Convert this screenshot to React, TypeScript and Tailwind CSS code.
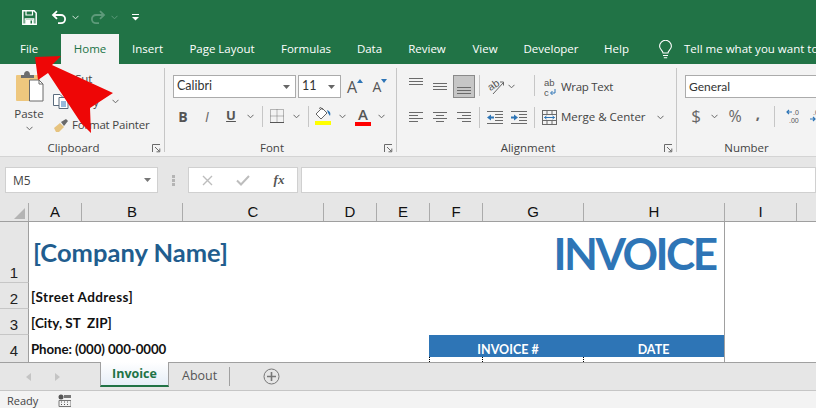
import React from "react";

const ui = { fontFamily: '"Open Sans", "Noto Sans", sans-serif' };
const cal = { fontFamily: 'Lato, "Open Sans", sans-serif' };
const ar = { fontFamily: '"Liberation Sans", Arial, sans-serif' };

const Chev = ({ color = "#666" }: { color?: string }) => (
  <svg width="7" height="5" viewBox="0 0 7 5"><path d="M.5 .8 3.5 3.8 6.5 .8" fill="none" stroke={color} strokeWidth="1" /></svg>
);

const Slot = ({ className, children }: { className: string; children?: React.ReactNode }) => (
  <div className={"flex items-center justify-center shrink-0 " + className}>{children}</div>
);

const VSep = ({ className }: { className: string }) => <div className={"w-px shrink-0 bg-[#c6c6c6] " + className} />;

const Lines = ({ l, w = 16, h = 12, color = "#6a6a6a" }: { l: number[][]; w?: number; h?: number; color?: string }) => (
  <svg width={w} height={h} viewBox={`0 0 ${w} ${h}`}>
    {l.map(([a, b, y], i) => (
      <path key={i} d={`M${a} ${y + 0.5}H${b}`} stroke={color} strokeWidth="1" />
    ))}
  </svg>
);

const Launcher = () => (
  <svg width="9" height="9" viewBox="0 0 9 9" fill="none" stroke="#6a6a6a" strokeWidth="1">
    <path d="M.5 8V.5H8" />
    <path d="M3 3 7.5 7.5M7.8 4.5V7.8H4.5" />
  </svg>
);

const Group = ({ className, label, launcher, children }: { className: string; label: string; launcher?: boolean; children: React.ReactNode }) => (
  <div className={"flex flex-col shrink-0 h-[92px] " + className}>
    <div className="h-[76px]">{children}</div>
    <div className="h-[16px] flex items-center">
      <div className="flex-1 text-center text-[11.5px] leading-[16px] text-[#444]">{label}</div>
      {launcher && (
        <div className="w-[17px] flex justify-end pr-[3px]">
          <Launcher />
        </div>
      )}
    </div>
  </div>
);

const Tab = ({ className, children }: { className: string; children: React.ReactNode }) => (
  <div className={"h-[30px] flex items-center justify-center text-[11.5px] text-white shrink-0 " + className}>{children}</div>
);

const ColH = ({ className, children }: { className: string; children?: React.ReactNode }) => (
  <div className={"h-[18px] flex items-center justify-center border-r border-[#ababab] text-[15px] leading-[18px] text-[#111] shrink-0 " + className} style={ar}>
    {children}
  </div>
);

const RowH = ({ className, children }: { className?: string; children: React.ReactNode }) => (
  <div className={"flex items-end justify-center bg-[#e6e6e6] border-r border-r-[#9f9f9f] border-b border-b-[#c6c6c6] text-[15px] leading-[18px] text-[#222] font-normal " + (className || "")} style={ar}>
    {children}
  </div>
);

const Pad = ({ className, children }: { className: string; children?: React.ReactNode }) => (
  <div className={"bg-white " + className}>{children}</div>
);

export default function App() {
  return (
    <div className="relative w-[816px] h-[408px] overflow-hidden flex flex-col bg-[#e6e6e6]" style={ui}>
      {/* title bar */}
      <div className="h-[34px] bg-[#217346] flex items-center shrink-0 pt-[1px]">
        <svg className="ml-[22px] shrink-0" width="15" height="15" viewBox="0 0 15 15" fill="none" stroke="#fff" strokeWidth="1.5">
          <path d="M.8.8H12L14.2 3V14.2H.8Z" />
          <path d="M4 1V5H10.5V1" strokeWidth="1.2" />
          <path d="M3.2 14V8.8H11.8V14" strokeWidth="1.2" />
          <rect x="4" y="9.5" width="7" height="4.5" fill="#fff" stroke="none" />
          <rect x="8.5" y="10.5" width="1.5" height="3" fill="#217346" stroke="none" />
        </svg>
        <svg className="ml-[14px] shrink-0" width="16" height="15" viewBox="0 0 16 15" fill="none" stroke="#fff" strokeWidth="1.8">
          <path d="M6 1.2 2 5 6 8.8" />
          <path d="M2.5 5H10a4 4 0 0 1 0 8.2H7" />
        </svg>
        <Slot className="w-[8px] ml-[4px]"><Chev color="#d7e8de" /></Slot>
        <svg className="ml-[11px] shrink-0" width="16" height="15" viewBox="0 0 16 15" fill="none" stroke="#5d9a7a" strokeWidth="1.8">
          <path d="M10 1.2 14 5 10 8.8" />
          <path d="M13.5 5H6a4 4 0 0 0 0 8.2H9" />
        </svg>
        <Slot className="w-[8px] ml-[4px]"><Chev color="#5d9a7a" /></Slot>
        <svg className="ml-[14px] shrink-0" width="7" height="7" viewBox="0 0 7 7" fill="#fff">
          <rect x="0" y="0" width="7" height="1" />
          <path d="M0 3H7L3.5 6.5Z" />
        </svg>
      </div>

      {/* tabs */}
      <div className="h-[30px] bg-[#217346] flex shrink-0">
        <Tab className="w-[61px] !justify-start pl-[20px]">File</Tab>
        <Tab className="w-[58px] bg-[#f3f3f3] !text-[#217346]">Home</Tab>
        <Tab className="w-[57px]">Insert</Tab>
        <Tab className="w-[92px]">Page Layout</Tab>
        <Tab className="w-[76px]">Formulas</Tab>
        <Tab className="w-[51px]">Data</Tab>
        <Tab className="w-[64px]">Review</Tab>
        <Tab className="w-[52px]">View</Tab>
        <Tab className="w-[80px]">Developer</Tab>
        <Tab className="w-[51px]">Help</Tab>
        <svg className="ml-[16px] mt-[6px] shrink-0" width="15" height="19" viewBox="0 0 15 19" fill="none" stroke="#fff" strokeWidth="1.1">
          <path d="M5 13C5 10.5 1.6 9.5 1.6 6.2a5.9 5.9 0 0 1 11.8 0C13.4 9.5 10 10.5 10 13Z" />
          <path d="M5 15.5H10M5.8 17.8H9.2" />
        </svg>
        <Tab className="ml-[11px] whitespace-nowrap">Tell me what you want to do</Tab>
      </div>

      {/* ribbon */}
      <div className="h-[92px] bg-[#f3f3f3] flex shrink-0 text-[#444] text-[11.5px]">
        <Group className="w-[164px]" label="Clipboard" launcher>
          <div className="flex">
            <div className="w-[53px] pl-[5px] flex flex-col items-center shrink-0">
              <svg className="mt-[7px]" width="29" height="32" viewBox="0 0 29 32">
                <rect x="1" y="4" width="24" height="26" rx="1" fill="#eec77e" />
                <path d="M6 4H9C9 1 10.5 0 12 0S15 1 15 4H19V7H6Z" fill="#6d6d6d" />
                <path d="M14.500 9H24L28 13V30H14.500Z" fill="#fff" stroke="#6a6a6a" />
                <path d="M24 9V13H28" fill="none" stroke="#6a6a6a" />
              </svg>
              <div className="text-[11.5px] leading-[16px] mt-[3px]">Paste</div>
              <div className="mt-[4px]"><Chev /></div>
            </div>
            <div className="flex flex-col">
              <div className="h-[23px] flex items-center pl-[21px] mt-[3px]">Cut</div>
              <div className="h-[23px] flex items-center">
                <svg width="16" height="15" viewBox="0 0 16 15" fill="none" stroke="#5a6b7d">
                  <path d="M.5.5H7L9 2.500V11.500H.5Z" fill="#fff" />
                  <path d="M6 3.500H12L15 6.500V14.500H6Z" fill="#fff" />
                  <path d="M8 8H13M8 10H13M8 12H13" stroke="#2e75b6" />
                </svg>
                <span className="ml-[3px]">Copy</span>
                <span className="ml-[13px]"><Chev /></span>
              </div>
              <div className="h-[24px] flex items-center">
                <svg width="16" height="15" viewBox="0 0 16 15">
                  <path d="M1 10 7 5 11 9 6 14H3Z" fill="#e6c37f" />
                  <path d="M8 4 13 1 15 3 11 8Z" fill="#6a6a6a" />
                </svg>
                <span className="ml-[3px] whitespace-nowrap tracking-[-0.2px]">Format Painter</span>
              </div>
            </div>
          </div>
        </Group>
        <VSep className="h-[84px] mt-[4px]" />

        <Group className="w-[231px]" label="Font" launcher>
          <div className="flex pt-[11px] pl-[8px] items-center">
            <div className="w-[123px] h-[23px] bg-white border border-[#ababab] flex items-center justify-between pl-[3px] pr-[5px] text-[#333]" style={cal}>
              <span className="text-[12.5px]">Calibri</span>
              <svg width="7" height="4" viewBox="0 0 7 4"><path d="M0 0H7L3.500 4Z" fill="#666" /></svg>
            </div>
            <div className="w-[43px] h-[23px] ml-[2px] bg-white border border-[#ababab] flex items-center justify-between pl-[3px] pr-[5px] text-[#333]" style={cal}>
              <span className="text-[12.5px]">11</span>
              <svg width="7" height="4" viewBox="0 0 7 4"><path d="M0 0H7L3.500 4Z" fill="#666" /></svg>
            </div>
            <Slot className="w-[26px] ml-[1px]">
              <span className="text-[16px] leading-[20px] text-[#555]">A</span>
              <svg className="mb-[12px]" width="6" height="4" viewBox="0 0 6 4"><path d="M0 4H6L3 0Z" fill="#2e75b6" /></svg>
            </Slot>
            <Slot className="w-[24px]">
              <span className="text-[14px] leading-[20px] text-[#555]">A</span>
              <svg className="mb-[12px]" width="6" height="4" viewBox="0 0 6 4"><path d="M0 0H6L3 4Z" fill="#2e75b6" /></svg>
            </Slot>
          </div>
          <div className="flex pl-[6px] items-center mt-[6px] h-[24px]">
            <Slot className="w-[24px] font-bold text-[14px] text-[#555]">B</Slot>
            <Slot className="w-[24px] italic text-[14px] text-[#666]">I</Slot>
            <Slot className="w-[24px] underline font-bold text-[13px] text-[#555]">U</Slot>
            <Slot className="w-[14px]"><Chev /></Slot>
            <VSep className="h-[21px] ml-[5px]" />
            <Slot className="w-[28px]">
              <svg width="14" height="14" viewBox="0 0 14 14" fill="none" stroke="#777" strokeDasharray="1 1">
                <path d="M.5.5H13.500V13.500H.5ZM7 .5V13.500M.5 7H13.500" />
                <path d="M0 13.500H14" strokeDasharray="none" stroke="#555" />
              </svg>
            </Slot>
            <Slot className="w-[10px]"><Chev /></Slot>
            <VSep className="h-[21px] ml-[7px]" />
            <Slot className="w-[28px]">
              <svg width="17" height="18" viewBox="0 0 17 18">
                <path d="M7 1 1 7 6 12 12 6Z" fill="#fff" stroke="#666" />
                <path d="M4 1.500 6 .5 7.500 3" fill="none" stroke="#666" />
                <path d="M12 3C15 4 16 6 15 9L13 6Z" fill="#2e75b6" />
                <rect x="0" y="14" width="16" height="4" fill="#ffff00" />
              </svg>
            </Slot>
            <Slot className="w-[10px]"><Chev /></Slot>
            <div className="w-[24px] ml-[4px] flex flex-col items-center shrink-0">
              <span className="text-[15px] leading-[15px] text-[#555] font-semibold">A</span>
              <div className="w-[16px] h-[4px] bg-[#ff0000]" />
            </div>
            <Slot className="w-[12px]"><Chev /></Slot>
          </div>
        </Group>
        <VSep className="h-[84px] mt-[4px]" />

        <Group className="w-[279px]" label="Alignment" launcher>
          <div className="flex pt-[11px] pl-[7px] items-start h-[34px]">
            <Slot className="w-[24px] h-[12px]"><Lines w={14} h={8} l={[[0, 14, 1], [0, 14, 4], [0, 14, 7]]} /></Slot>
            <Slot className="w-[24px] h-[22px]"><Lines w={14} h={8} l={[[0, 14, 1], [0, 14, 4], [0, 14, 7]]} /></Slot>
            <div className="w-[22px] h-[23px] ml-[1px] bg-[#c6c6c6] border border-[#8a8a8a] flex items-end justify-center pb-[3px] shrink-0">
              <Lines w={14} h={8} l={[[0, 14, 1], [0, 14, 4], [0, 14, 7]]} />
            </div>
            <VSep className="h-[21px] ml-[4px]" />
            <Slot className="w-[25px] h-[23px] pl-[7px]">
              <svg width="17" height="18" viewBox="0 0 17 18" fill="none" className="shrink-0 overflow-visible">
                <text x="0" y="11" fontSize="10.500" fill="#555" transform="rotate(-35 5 8)" style={ar}>ab</text>
                <path d="M5 16 15 5M12 4H15.500V7.500" stroke="#666" />
              </svg>
            </Slot>
            <Slot className="w-[12px] h-[23px]"><Chev /></Slot>
            <VSep className="h-[21px] ml-[17px]" />
            <Slot className="w-[12px] ml-[9px] h-[23px]">
              <svg width="13" height="18" viewBox="0 0 13 18" className="shrink-0">
                <text x="0" y="8" fontSize="9.500" fill="#555" style={ar}>ab</text>
                <text x="0" y="17.500" fontSize="9.500" fill="#555" style={ar}>c</text>
                <path d="M11 11V15H7M8.500 13 6.500 15 8.500 17" fill="none" stroke="#2e75b6" />
              </svg>
            </Slot>
            <span className="ml-[5px] h-[23px] leading-[23px] whitespace-nowrap tracking-[-0.3px]">Wrap Text</span>
          </div>
          <div className="flex pl-[7px] items-center h-[24px] mt-[7px]">
            <Slot className="w-[24px]"><Lines w={14} h={11} l={[[0, 14, 0], [0, 9, 3], [0, 14, 6], [0, 9, 9]]} /></Slot>
            <Slot className="w-[24px]"><Lines w={14} h={11} l={[[0, 14, 0], [3, 11, 3], [0, 14, 6], [3, 11, 9]]} /></Slot>
            <Slot className="w-[24px]"><Lines w={14} h={11} l={[[0, 14, 0], [5, 14, 3], [0, 14, 6], [5, 14, 9]]} /></Slot>
            <VSep className="h-[21px] ml-[3px]" />
            <svg className="ml-[7px] shrink-0" width="16" height="13" viewBox="0 0 16 13">
              <path d="M0 .5H16M8 3.500H16M8 6.500H16M8 9.500H16M0 12.500H16" stroke="#6a6a6a" />
              <path d="M0 6.500 4 3.500V5.500H7V7.500H4V9.500Z" fill="#2e75b6" />
            </svg>
            <svg className="ml-[8px] shrink-0" width="16" height="13" viewBox="0 0 16 13">
              <path d="M0 .5H16M8 3.500H16M8 6.500H16M8 9.500H16M0 12.500H16" stroke="#6a6a6a" />
              <path d="M7 6.500 3 3.500V5.500H0V7.500H3V9.500Z" fill="#2e75b6" />
            </svg>
            <VSep className="h-[21px] ml-[7px]" />
            <svg className="ml-[7px] shrink-0" width="15" height="15" viewBox="0 0 15 15" fill="none">
              <rect x=".5" y=".5" width="14" height="14" stroke="#6a6a6a" />
              <path d="M.5 4.500H14.500M.5 10.500H14.500M5 .5V4.500M10 .5V4.500M5 10.500V14.500M10 10.500V14.500" stroke="#6a6a6a" />
              <path d="M2.500 7.500H12.500M4.500 6 2.500 7.500 4.500 9M10.500 6 12.500 7.500 10.500 9" stroke="#2e75b6" />
            </svg>
            <span className="ml-[4px] w-[93px] whitespace-nowrap shrink-0">Merge &amp; Center</span>
            <Slot className="w-[12px]"><Chev /></Slot>
          </div>
        </Group>
        <VSep className="h-[84px] mt-[4px]" />

        <Group className="flex-1 min-w-0 overflow-hidden" label="Number">
          <div className="pt-[11px] pl-[8px]">
            <div className="w-[160px] h-[23px] bg-white border border-[#ababab] flex items-center pl-[3px] text-[#333]" style={cal}>
              <span className="text-[12px]">General</span>
            </div>
          </div>
          <div className="flex pl-[8px] items-center mt-[6px] h-[24px]">
            <Slot className="w-[22px] text-[17px] text-[#666]">$</Slot>
            <Slot className="w-[12px] ml-[1px]"><Chev /></Slot>
            <Slot className="w-[24px] ml-[3px] text-[16px] text-[#666]">%</Slot>
            <Slot className="w-[20px] ml-[1px] font-bold text-[15px] text-[#666] pb-[5px]">,</Slot>
            <VSep className="h-[21px] ml-[6px]" />
            <svg className="ml-[11px] shrink-0" width="15" height="16" viewBox="0 0 15 16">
              <text x="7" y="6.500" fontSize="7" fill="#555" style={ar}>.0</text>
              <text x="3" y="15" fontSize="7" fill="#555" style={ar}>.00</text>
              <path d="M1 4H6M3 2 1 4 3 6" fill="none" stroke="#2e75b6" strokeWidth="1.2" />
            </svg>
            <svg className="ml-[9px] shrink-0" width="15" height="16" viewBox="0 0 15 16">
              <text x="3" y="6.500" fontSize="7" fill="#555" style={ar}>.00</text>
              <text x="7" y="15" fontSize="7" fill="#555" style={ar}>.0</text>
              <path d="M0 11H5M3 9 5 11 3 13" fill="none" stroke="#2e75b6" strokeWidth="1.2" />
            </svg>
          </div>
        </Group>
      </div>

      {/* formula bar */}
      <div className="h-[47px] border-t border-[#d4d4d4] pt-[10px] flex items-start shrink-0 bg-[#e6e6e6]">
        <div className="ml-[5px] w-[153px] h-[26px] bg-white border border-[#d0d0d0] flex items-center justify-between pl-[7px] pr-[6px] text-[12px] text-[#444] shrink-0">
          <span className="pt-[1px]">M5</span>
          <svg width="7" height="4" viewBox="0 0 7 4"><path d="M0 0H7L3.500 4Z" fill="#777" /></svg>
        </div>
        <Slot className="w-[30px] h-[26px]">
          <svg width="3" height="11" viewBox="0 0 3 11" fill="#b4b4b4">
            <rect width="3" height="3" /><rect y="4" width="3" height="3" /><rect y="8" width="3" height="3" />
          </svg>
        </Slot>
        <div className="w-[110px] h-[26px] bg-white border border-[#d0d0d0] flex items-center shrink-0">
          <Slot className="w-[36px] pl-[1px]">
            <svg width="11" height="11" viewBox="0 0 11 11"><path d="M1 1 10 10M10 1 1 10" stroke="#bdbdbd" strokeWidth="1.4" /></svg>
          </Slot>
          <Slot className="w-[36px]">
            <svg width="14" height="11" viewBox="0 0 14 11"><path d="M1 5.500 5 9.500 13 1" fill="none" stroke="#bdbdbd" strokeWidth="2" /></svg>
          </Slot>
          <Slot className="w-[36px] italic font-bold text-[13px] text-[#555]">
            <span style={{ fontFamily: '"Liberation Serif", serif' }}>fx</span>
          </Slot>
        </div>
        <div className="ml-[3px] flex-1 h-[26px] bg-white border border-[#d0d0d0]" />
      </div>

      {/* column headers */}
      <div className="h-[19px] flex shrink-0 bg-[#e6e6e6] border-b border-[#9f9f9f]">
        <div className="w-[29px] h-[18px] border-r border-[#ababab] flex items-end justify-end pr-[3px] pb-[2px] shrink-0">
          <svg width="11" height="11" viewBox="0 0 11 11"><path d="M11 0V11H0Z" fill="#b4b4b4" /></svg>
        </div>
        <ColH className="w-[53px]">A</ColH>
        <ColH className="w-[101px]">B</ColH>
        <ColH className="w-[141px]">C</ColH>
        <ColH className="w-[53px]">D</ColH>
        <ColH className="w-[53px]">E</ColH>
        <ColH className="w-[53px]">F</ColH>
        <ColH className="w-[101px]">G</ColH>
        <ColH className="w-[141px]">H</ColH>
        <ColH className="w-[72px]">I</ColH>
        <ColH className="flex-1 !border-r-0" />
      </div>

      {/* sheet */}
      <div className="h-[140px] shrink-0 grid grid-cols-[29px_400px_53px_101px_142px_1fr] grid-rows-[61px_26px_26px_27px] font-bold" style={cal}>
        <RowH>1</RowH>
        <Pad className="flex items-center pl-[4px] text-[25.5px] text-[#215d8e]">[Company Name]</Pad>
        <Pad className="col-span-3 flex items-center justify-end pr-[8.5px] border-r border-[#a0a0a0] text-[44px] tracking-[-2.5px] text-[#2e75b6]">INVOICE</Pad>
        <Pad className="" />

        <RowH>2</RowH>
        <Pad className="col-span-4 border-r border-[#a0a0a0] flex items-center pl-[2px] pt-[3px] text-[13.5px] tracking-[0.4px] text-[#111]">[Street Address]</Pad>
        <Pad className="" />

        <RowH>3</RowH>
        <Pad className="col-span-4 border-r border-[#a0a0a0] flex items-center pl-[2px] pt-[3px] text-[13.5px] text-[#111]">[City, ST&nbsp; ZIP]</Pad>
        <Pad className="" />

        <RowH className="pb-[2px] !border-b-0">4</RowH>
        <Pad className="flex items-center pl-[2px] pt-[3px] text-[13.3px] tracking-[-0.1px] text-[#111]">Phone: (000) 000-0000</Pad>
        <Pad className="col-span-2 flex flex-col">
          <div className="h-[22px] bg-[#2e75b6] text-white text-[12.500px] flex items-end justify-center leading-[14px] pl-[4px]">INVOICE #</div>
          <div className="flex-1 flex">
            <div className="w-[53px] border-l border-dotted border-black" />
            <div className="flex-1 border-l border-dotted border-black" />
          </div>
        </Pad>
        <Pad className="border-r border-[#a0a0a0] flex flex-col">
          <div className="h-[22px] bg-[#2e75b6] text-white text-[12.500px] flex items-end justify-center leading-[14px]">DATE</div>
          <div className="flex-1 border-l border-dotted border-black" />
        </Pad>
        <Pad className="" />
      </div>

      {/* sheet tabs */}
      <div className="h-[29px] shrink-0 flex border-b border-[#c6c6c6] bg-[#e6e6e6]">
        <div className="w-[100px] h-[28px] border-t border-[#a0a0a0] flex items-center shrink-0">
          <svg className="ml-[26px]" width="5" height="8" viewBox="0 0 5 8"><path d="M5 0V8L0 4Z" fill="#c4c4c4" /></svg>
          <svg className="ml-[24px]" width="5" height="8" viewBox="0 0 5 8"><path d="M0 0V8L5 4Z" fill="#c4c4c4" /></svg>
        </div>
        <div className="w-[69px] h-[25px] shrink-0 border-x border-[#a0a0a0] border-b-2 border-b-[#217346] bg-linear-to-b from-white to-[#e6eef7] flex items-center justify-center pt-[2px] font-bold text-[12.5px] text-[#217346]">
          Invoice
        </div>
        <div className="flex-1 h-[28px] border-t border-[#a0a0a0] flex items-center">
          <span className="ml-[13px] w-[47px] text-[12.500px] text-[#555] shrink-0">About</span>
          <div className="w-px h-[19px] bg-[#a0a0a0]" />
          <svg className="ml-[33px]" width="17" height="17" viewBox="0 0 17 17" fill="none" stroke="#777">
            <circle cx="8.500" cy="8.500" r="7.500" />
            <path d="M8.500 4V13M4 8.500H13" strokeWidth="1.6" />
          </svg>
        </div>
      </div>

      {/* status */}
      <div className="h-[17px] overflow-hidden bg-[#f3f3f3] flex items-start text-[11px] leading-[13px] text-[#444]">
        <span className="ml-[7px] w-[51px] shrink-0 mt-[3px]">Ready</span>
        <svg className="mt-[3px]" width="13" height="13" viewBox="0 0 13 13">
          <circle cx="3" cy="3" r="2.500" fill="#555" />
          <path d="M6 1H13V4H6Z" fill="#777" />
          <path d="M1 6.500H13V12.500H1Z" fill="none" stroke="#777" />
          <path d="M3 8H4M6 8H7M9 8H10M3 10.500H4M6 10.500H7M9 10.500H10" stroke="#555" />
        </svg>
      </div>

      {/* red annotation arrow */}
      <svg className="absolute left-0 top-0 pointer-events-none" width="816" height="408">
        <path d="M35 57 61 56 52 65 113 93 90 108 91 133 81 123 48 73 38 80Z" fill="#ee0606" />
      </svg>
    </div>
  );
}
